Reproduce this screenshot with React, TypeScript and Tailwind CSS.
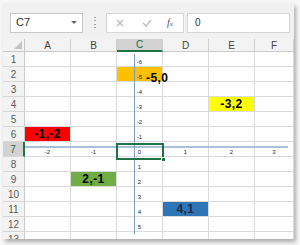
import React from 'react'

const cols = ['A', 'B', 'C', 'D', 'E', 'F']
const colW = ['w-[46px]', 'w-[46px]', 'w-[46px]', 'w-[46px]', 'w-[46px]', 'w-[39px]']

// fills keyed by "col-row"
const fills: Record<string, { bg: string; label?: string; text?: string }> = {
  'C-2': { bg: 'bg-[#ffc000]' },
  'E-4': { bg: 'bg-[#ffff00]', label: '-3,2' },
  'A-6': { bg: 'bg-[#ff0000]', label: '-1,-2' },
  'B-9': { bg: 'bg-[#70ad47]', label: '2,-1' },
  'D-11': { bg: 'bg-[#2e75b6]', label: '4,1', text: 'text-[#1c2a44]' },
}

function axisValue(c: number, r: number) {
  if (r > 12) return ''
  if (r === 7) return String(c - 2)
  if (c === 2) return String(r - 7)
  return ''
}

function Row({ r }: { r: number }) {
  const sel = r === 7
  return (
    <div className="flex h-[15px]">
      <div
        className={`w-[22px] shrink-0 flex items-center justify-center text-[10px] border-b border-[#d6d6d6] ${
          sel ? 'bg-[#d2d2d2] text-[#1e6b3f] border-r-2 border-r-[#217346]' : 'bg-[#f3f3f3] text-[#5b5b5b] border-r border-r-[#c9c9c9]'
        }`}
      >
        {r}
      </div>
      {cols.map((c, i) => {
        const f = fills[`${c}-${r}`]
        const v = axisValue(i, r)
        return (
          <div
            key={c}
            className={`${colW[i]} shrink-0 relative border-r border-b border-[#dadada] ${f ? f.bg : 'bg-white'}`}
          >
            {f?.label && (
              <div className={`absolute inset-0 flex items-center justify-center text-[12px] font-bold tracking-[0.4px] ${f.text ?? 'text-black'}`}>
                {f.label}
              </div>
            )}
            {v && (
              <div className="absolute inset-x-0 bottom-[1px] text-center text-[6px] leading-none text-[#222]">{v}</div>
            )}
          </div>
        )
      })}
    </div>
  )
}

export default function App() {
  return (
    <div className="w-[300px] h-[245px] bg-[#f7f7f7] overflow-hidden" style={{ fontFamily: '"Liberation Sans", Arial, sans-serif' }}>
      <div className="relative ml-[3px] mt-[3px] w-[291px] h-[236px] bg-[#f1f1f1] shadow-[2px_3px_4px_rgba(0,0,0,0.3)] overflow-hidden">
        {/* formula bar */}
        <div className="flex items-center h-[36px] pt-[3px]">
          <div className="ml-[7px] w-[73px] h-[20px] bg-white border border-[#c8c8c8] flex items-center justify-between px-[5px]">
            <span className="text-[11px] text-[#333]">C7</span>
            <svg width="6" height="4" viewBox="0 0 6 4"><path d="M0 0h6L3 3z" fill="#666" /></svg>
          </div>
          <div className="ml-[11px] w-[2px] h-[11px] flex flex-col justify-between">
            <div className="h-[1px] bg-[#a0a0a0]" />
            <div className="h-[1px] bg-[#a0a0a0]" />
            <div className="h-[1px] bg-[#a0a0a0]" />
            <div className="h-[1px] bg-[#a0a0a0]" />
          </div>
          <div className="ml-[10px] w-[78px] h-[20px] bg-white border border-[#d6d6d6] flex items-center">
            <svg className="ml-[9px]" width="8" height="8" viewBox="0 0 8 8"><path d="M1 1l6 6M7 1L1 7" stroke="#b9b9b9" strokeWidth="1.2" /></svg>
            <svg className="ml-[18px]" width="10" height="8" viewBox="0 0 10 8"><path d="M1 4l3 3 5-6" stroke="#b9b9b9" strokeWidth="1.2" fill="none" /></svg>
            <span className="ml-[15px] text-[10px] italic text-[#555]" style={{ fontFamily: '"Liberation Serif", serif' }}>
              f<span className="text-[7px]">x</span>
            </span>
          </div>
          <div className="ml-[3px] w-[103px] h-[20px] bg-white border border-[#d6d6d6] flex items-center pl-[7px]">
            <span className="text-[10px] text-[#333]">0</span>
          </div>
        </div>

        {/* column headers */}
        <div className="flex h-[13px]">
          <div className="w-[22px] shrink-0 bg-[#f3f3f3] border-r border-b border-[#c9c9c9] relative">
            <svg className="absolute right-[2px] bottom-[2px]" width="8" height="8" viewBox="0 0 8 8"><path d="M8 0v8H0z" fill="#c3c3c3" /></svg>
          </div>
          {cols.map((c, i) => (
            <div
              key={c}
              className={`${colW[i]} shrink-0 flex items-center justify-center text-[10px] border-r border-[#d0d0d0] ${
                c === 'C' ? 'bg-[#d2d2d2] text-[#1e6b3f] border-b-2 border-b-[#217346]' : 'bg-[#f3f3f3] text-[#444] border-b border-b-[#c9c9c9]'
              }`}
            >
              {c}
            </div>
          ))}
        </div>

        {/* rows */}
        {Array.from({ length: 13 }, (_, k) => (
          <Row key={k} r={k + 1} />
        ))}

        {/* axes */}
        <div className="absolute left-[22px] top-[143px] w-[263px] h-[2px] bg-[#a9c0d9]" />
        <div className="absolute left-[131px] top-[51px] w-[1px] h-[180px] bg-[#7b9cc4]" />

        {/* selection C7 */}
        <div className="absolute left-[113px] top-[140px] w-[48px] h-[17px] border-2 border-[#217346]" />
        <div className="absolute left-[158px] top-[154px] w-[5px] h-[5px] bg-[#217346] border border-white" />

        {/* floating label */}
        <div className="absolute left-[143px] top-[66px] text-[12px] font-bold tracking-[0.4px] text-black">-5,0</div>
      </div>
    </div>
  )
}
